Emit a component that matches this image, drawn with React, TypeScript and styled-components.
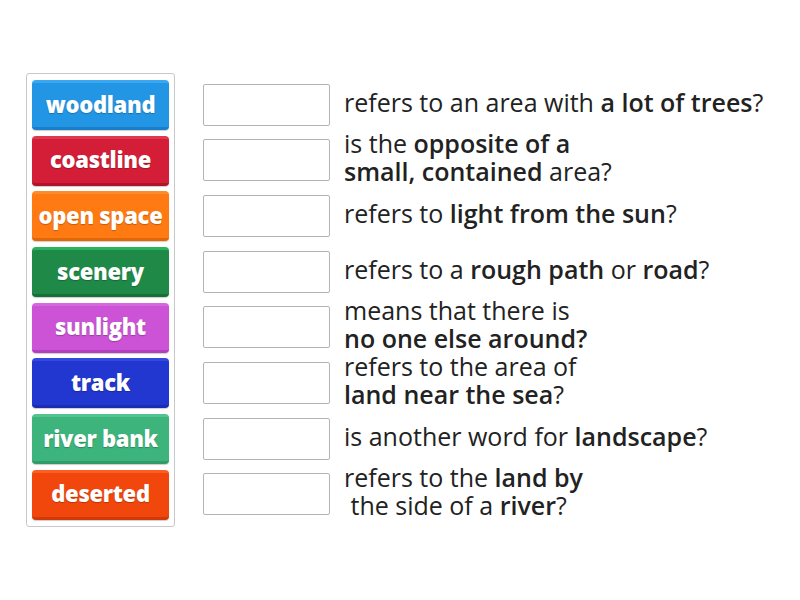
import React from "react";
import styled, { createGlobalStyle } from "styled-components";

const Global = createGlobalStyle`
  html, body { margin: 0; padding: 0; background: #fff; }
  body { font-family: "Open Sans", "Liberation Sans", sans-serif; }
`;

const Page = styled.div`
  display: flex;
  align-items: flex-start;
  padding: 73px 0 0 26px;
  gap: 28px;
`;

const Panel = styled.div`
  display: flex;
  flex-direction: column;
  gap: 5.7px;
  padding: 6px 5px;
  border: 1px solid #c8c8c8;
  border-radius: 3px;
`;

const Tile = styled.div<{ $bg: string; $top: string; $bottom: string }>`
  width: 137px;
  height: 50px;
  box-sizing: border-box;
  display: flex;
  align-items: center;
  justify-content: center;
  background: ${(p) => p.$bg};
  border-top: 3px solid ${(p) => p.$top};
  border-bottom: 3px solid ${(p) => p.$bottom};
  border-radius: 4px;
  color: #fff;
  font-family: "Open Sans", sans-serif;
  font-weight: 800;
  font-size: 22px;
  letter-spacing: -0.3px;
  white-space: nowrap;
  text-shadow: 0 1px 1px rgba(0, 0, 0, 0.25);
  box-shadow: 0 1px 1px rgba(0, 0, 0, 0.2);
  padding-bottom: 3px;
`;

const Rows = styled.div`
  display: flex;
  flex-direction: column;
  gap: 5.7px;
  padding-top: 7px;
`;

const Row = styled.div`
  height: 50px;
  display: flex;
  align-items: center;
  gap: 14px;
`;

const Box = styled.div`
  width: 127px;
  height: 42px;
  box-sizing: border-box;
  border: 1px solid #b4b4b4;
  border-radius: 2px;
  background: #fff;
  flex: none;
  margin-top: -1px;
`;

const Clue = styled.div`
  font-family: "Open Sans", sans-serif;
  font-size: 25px;
  line-height: 28px;
  color: #222;
  margin-top: -7px;
  white-space: nowrap;
  b { font-weight: 600; }
`;

const tiles = [
  { t: "woodland", bg: "#2296e4", top: "#3aa8f0", bottom: "#1a7fc8" },
  { t: "coastline", bg: "#d41d36", top: "#e0384e", bottom: "#b0142b" },
  { t: "open space", bg: "#ff7a12", top: "#ff8c2c", bottom: "#e06806" },
  { t: "scenery", bg: "#1f8a48", top: "#2ab35e", bottom: "#17703a" },
  { t: "sunlight", bg: "#cc52d6", top: "#d668de", bottom: "#b43ec0" },
  { t: "track", bg: "#2236d0", top: "#3348e0", bottom: "#1a2cb2" },
  { t: "river bank", bg: "#3cb47c", top: "#54c38f", bottom: "#2f9c69" },
  { t: "deserted", bg: "#f2470c", top: "#ff5e22", bottom: "#cf3a06" },
];

const clues: React.ReactNode[] = [
  <>refers to an area with <b>a lot of trees</b>?</>,
  <>is the <b>opposite of a</b><br /><b>small, contained</b> area?</>,
  <>refers to <b>light from the sun</b>?</>,
  <>refers to a <b>rough path</b> or <b>road</b>?</>,
  <>means that there is<br /><b>no one else around?</b></>,
  <>refers to the area of<br /><b>land near the sea</b>?</>,
  <>is another word for <b>landscape</b>?</>,
  <>refers to the <b>land by</b><br />&nbsp;the side of a <b>river</b>?</>,
];

export default function App() {
  return (
    <>
      <Global />
      <Page>
        <Panel>
          {tiles.map((x) => (
            <Tile key={x.t} $bg={x.bg} $top={x.top} $bottom={x.bottom}>
              {x.t}
            </Tile>
          ))}
        </Panel>
        <Rows>
          {clues.map((c, i) => (
            <Row key={i}>
              <Box />
              <Clue>{c}</Clue>
            </Row>
          ))}
        </Rows>
      </Page>
    </>
  );
}
